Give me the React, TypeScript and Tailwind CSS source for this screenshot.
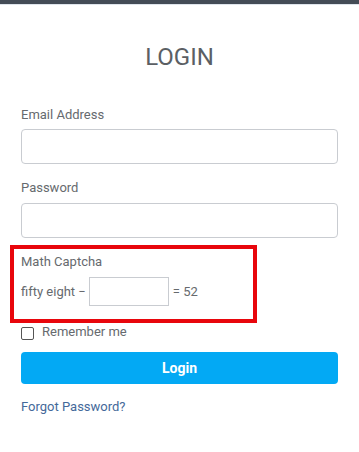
import React from "react";

export default function App() {
  return (
    <div className="w-[359px] h-[452px] bg-white overflow-hidden" style={{ fontFamily: "Roboto, 'Liberation Sans', sans-serif" }}>
      <div className="h-[4px] bg-[#444c56]" />
      <div className="h-[1px] bg-[#dfe5ec]" />
      <div className="px-[21px]">
        <h1 className="mt-[38px] text-center text-[24px] leading-[28px] text-[#5b5f64] font-normal">LOGIN</h1>

        <label className="block mt-[34px] text-[13px] leading-[20px] text-[#666a6e]">Email Address</label>
        <input type="text" className="block mt-[4px] w-full h-[35px] border border-[#c9ccd1] rounded-[4px] outline-none" />

        <label className="block mt-[14px] text-[13px] leading-[20px] text-[#666a6e]">Password</label>
        <input type="password" className="block mt-[5px] w-full h-[35px] border border-[#c9ccd1] rounded-[4px] outline-none" />

        <div className="mt-[7px] -ml-[11px] w-[247px] border-[4px] border-[#e8060c] pl-[7px] pt-[3px] pb-[13px]">
          <div className="text-[13px] leading-[20px] text-[#666a6e]">Math Captcha</div>
          <div className="mt-[5px] flex items-center gap-[4px] text-[13px] leading-[20px] text-[#666a6e]">
            <span>fifty eight −</span>
            <input type="text" className="-ml-[1px] w-[80px] h-[29px] border border-[#c9ccd1] outline-none" />
            <span>= 52</span>
          </div>
        </div>

        <div className="-mt-[1px] flex items-center">
          <span className="mt-[3px] w-[13px] h-[13px] border border-[#555] rounded-[2px] bg-white" />
          <span className="ml-[8px] text-[13px] leading-[20px] text-[#666a6e]">Remember me</span>
        </div>

        <button className="mt-[10px] w-full h-[32px] rounded-[4px] bg-[#03a9f4] text-white text-[14px] font-bold">Login</button>

        <a className="block mt-[13px] text-[13px] leading-[20px] text-[#44699a]">Forgot Password?</a>
      </div>
    </div>
  );
}
